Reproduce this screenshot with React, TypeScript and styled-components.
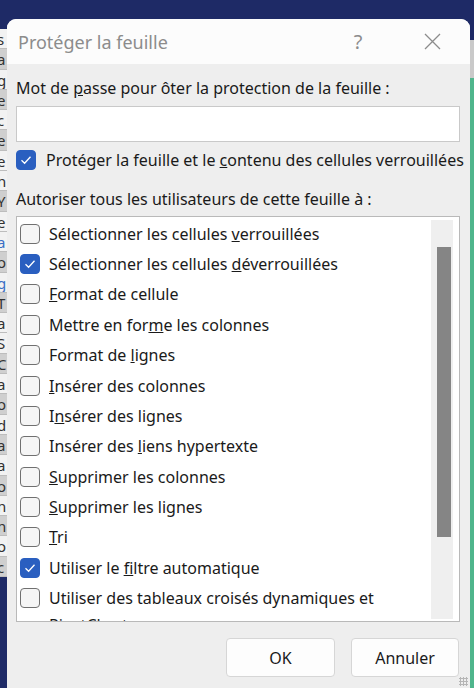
import * as React from 'react'
import styled, { createGlobalStyle } from 'styled-components'

const GlobalStyle = createGlobalStyle`
  html, body {
    margin: 0;
    padding: 0;
    width: 474px;
    height: 688px;
    overflow: hidden;
    background: #1e2a66;
  }
  * { box-sizing: border-box; }
`

const FONT = `"Noto Sans", "Open Sans", Arial, sans-serif`

const Page = styled.div`
  width: 474px;
  height: 688px;
  display: flex;
  padding-top: 19px;
  background: #1e2a66;
  font-family: ${FONT};
  overflow: hidden;
`

const LeftStrip = styled.div`
  width: 7px;
  flex-shrink: 0;
  display: flex;
  flex-direction: column;
  padding-top: 10px;
  background: #1e2a66;
  overflow: hidden;
`

const Cell = styled.div<{ $shade: boolean; $blue?: boolean }>`
  height: 20.3px;
  flex-shrink: 0;
  background: ${(p) => (p.$shade ? '#cfcfcf' : '#f2f2f2')};
  color: ${(p) => (p.$blue ? '#3a6fc4' : '#333')};
  font-size: 15px;
  line-height: 20px;
  text-indent: -3px;
  overflow: hidden;
  white-space: nowrap;
  border-bottom: 1px solid #bdbdbd;
`

const RightStrip = styled.div`
  width: 4px;
  flex-shrink: 0;
  display: flex;
  flex-direction: column;
`

const RightTop = styled.div`
  height: 21px;
  background: #1e2a66;
`

const RightGray = styled.div`
  height: 38px;
  background: #c9c9c9;
`

const RightGreen = styled.div`
  flex: 1;
  background: #4fb58c;
`

const Dialog = styled.div`
  width: 463px;
  flex-shrink: 0;
  display: flex;
  flex-direction: column;
  background: #eeeeee;
  border-radius: 9px 9px 0 0;
  overflow: hidden;
  position: relative;
`

const TitleBar = styled.div`
  height: 45px;
  flex-shrink: 0;
  background: #fcfcfc;
  display: flex;
  align-items: center;
  padding: 0 0 0 11px;
`

const Title = styled.div`
  flex: 1;
  color: #8c8c8c;
  font-size: 18px;
  padding-top: 1px;
`

const TitleIcon = styled.div<{ $w: number; $mr: number }>`
  width: ${(p) => p.$w}px;
  margin-right: ${(p) => p.$mr}px;
  display: flex;
  justify-content: center;
  align-items: center;
  color: #8c8c8c;
  font-size: 20px;
`

const Body = styled.div`
  flex: 1;
  display: flex;
  flex-direction: column;
  padding: 12px 9px 0 9px;
  color: #1a1a1a;
  font-size: 16px;
`

const Label = styled.div<{ $mt?: number }>`
  height: 24px;
  flex-shrink: 0;
  line-height: 24px;
  margin-top: ${(p) => p.$mt ?? 0}px;
  white-space: nowrap;
`

const Input = styled.div`
  height: 36px;
  flex-shrink: 0;
  margin-top: 6px;
  background: #ffffff;
  border: 1px solid #c9c9c9;
  width: 444px;
`

const CheckRow = styled.div<{ $mt?: number; $gap?: number }>`
  display: flex;
  flex-shrink: 0;
  align-items: center;
  gap: ${(p) => p.$gap ?? 10}px;
  height: 30.4px;
  margin-top: ${(p) => p.$mt ?? 0}px;
  white-space: nowrap;
`

// élément sur deux lignes (texte renvoyé à la ligne)
const WrapRow = styled.div`
  display: flex;
  flex-shrink: 0;
  align-items: flex-start;
  gap: 9px;
  padding-top: 5px;
`

const WrapText = styled.span`
  margin-top: -3.5px;
  line-height: 27px;
  width: 360px;
`

const Box = styled.div<{ $on: boolean }>`
  width: 20px;
  height: 20px;
  flex-shrink: 0;
  border-radius: 4px;
  border: 1px solid ${(p) => (p.$on ? '#2a5fc0' : '#707070')};
  background: ${(p) => (p.$on ? '#2a5fc0' : '#f5f5f5')};
  display: flex;
  align-items: center;
  justify-content: center;
`

const ListBox = styled.div`
  margin-top: 5px;
  width: 444px;
  height: 406px;
  flex-shrink: 0;
  background: #ffffff;
  border: 1px solid #b9b9b9;
  display: flex;
  overflow: hidden;
`

const ListItems = styled.div`
  flex: 1;
  padding: 1px 0 0 3px;
  display: flex;
  flex-direction: column;
  overflow: hidden;
`

const ScrollTrack = styled.div`
  width: 22px;
  margin: 3px 6px 2px 0;
  background: #efefef;
  padding: 27px 2px 0 6px;
`

const ScrollThumb = styled.div`
  height: 290px;
  background: #858585;
`

const Footer = styled.div`
  display: flex;
  justify-content: flex-end;
  gap: 16px;
  padding: 16px 2px 0 0;
`

const Button = styled.div<{ $w: number }>`
  width: ${(p) => p.$w}px;
  height: 39px;
  background: #fdfdfd;
  border: 1px solid #d6d6d6;
  border-radius: 4px;
  display: flex;
  align-items: center;
  justify-content: center;
  font-size: 16px;
  color: #1a1a1a;
`

const Grip = styled.div`
  position: absolute;
  right: 2px;
  bottom: 2px;
  width: 9px;
  height: 9px;
  background-image: radial-gradient(circle, #b5b5b5 1px, transparent 1.2px);
  background-size: 3px 3px;
`

const Check = () => (
  <svg width="12" height="10" viewBox="0 0 12 10">
    <path d="M1.5 5.2 L4.6 8.2 L10.5 1.8" fill="none" stroke="#ffffff" strokeWidth="1.3" />
  </svg>
)

// texte avec touche d'accès soulignée
const K: React.FC<{ t: string; k: number }> = ({ t, k }) => (
  <span>
    {t.slice(0, k)}
    <u>{t[k]}</u>
    {t.slice(k + 1)}
  </span>
)

const items: { t: string; k: number; on: boolean }[] = [
  { t: 'Sélectionner les cellules verrouillées', k: 26, on: false },
  { t: 'Sélectionner les cellules déverrouillées', k: 26, on: true },
  { t: 'Format de cellule', k: 0, on: false },
  { t: 'Mettre en forme les colonnes', k: 13, on: false },
  { t: 'Format de lignes', k: 10, on: false },
  { t: 'Insérer des colonnes', k: 0, on: false },
  { t: 'Insérer des lignes', k: 1, on: false },
  { t: 'Insérer des liens hypertexte', k: 12, on: false },
  { t: 'Supprimer les colonnes', k: 0, on: false },
  { t: 'Supprimer les lignes', k: 0, on: false },
  { t: 'Tri', k: 0, on: false },
  { t: 'Utiliser le filtre automatique', k: 12, on: true },
]

const cells = 'sageceenYeaogTaSCaodaaonnoc'.split('')
const shaded = [1, 3, 5, 8, 11, 13, 16, 18, 20, 22, 24, 26]

const App: React.FC = () => {
  return (
    <>
      <GlobalStyle />
      <Page>
        <LeftStrip>
          {cells.map((c, i) => (
            <Cell key={i} $shade={shaded.includes(i)} $blue={i === 10 || i === 12}>
              {c}
            </Cell>
          ))}
        </LeftStrip>
        <Dialog>
          <TitleBar>
            <Title>Protéger la feuille</Title>
            <TitleIcon $w={28} $mr={46}>?</TitleIcon>
            <TitleIcon $w={28} $mr={24}>
              <svg width="17" height="17" viewBox="0 0 17 17">
                <path d="M1 1 L16 16 M16 1 L1 16" stroke="#8c8c8c" strokeWidth="1.3" />
              </svg>
            </TitleIcon>
          </TitleBar>
          <Body>
            <Label>
              <K t="Mot de passe pour ôter la protection de la feuille :" k={7} />
            </Label>
            <Input />
            <CheckRow $mt={3}>
              <Box $on={true}>
                <Check />
              </Box>
              <K t="Protéger la feuille et le contenu des cellules verrouillées" k={26} />
            </CheckRow>
            <Label $mt={12}>Autoriser tous les utilisateurs de cette feuille à :</Label>
            <ListBox>
              <ListItems>
                {items.map((it, i) => (
                  <CheckRow key={i} $gap={9}>
                    <Box $on={it.on}>{it.on && <Check />}</Box>
                    <K t={it.t} k={it.k} />
                  </CheckRow>
                ))}
                <WrapRow>
                  <Box $on={false} />
                  <WrapText>Utiliser des tableaux croisés dynamiques et PivotCharts</WrapText>
                </WrapRow>
              </ListItems>
              <ScrollTrack>
                <ScrollThumb />
              </ScrollTrack>
            </ListBox>
            <Footer>
              <Button $w={109}>OK</Button>
              <Button $w={108}>Annuler</Button>
            </Footer>
          </Body>
          <Grip />
        </Dialog>
        <RightStrip>
          <RightTop />
          <RightGray />
          <RightGreen />
        </RightStrip>
      </Page>
    </>
  )
}

export default App
